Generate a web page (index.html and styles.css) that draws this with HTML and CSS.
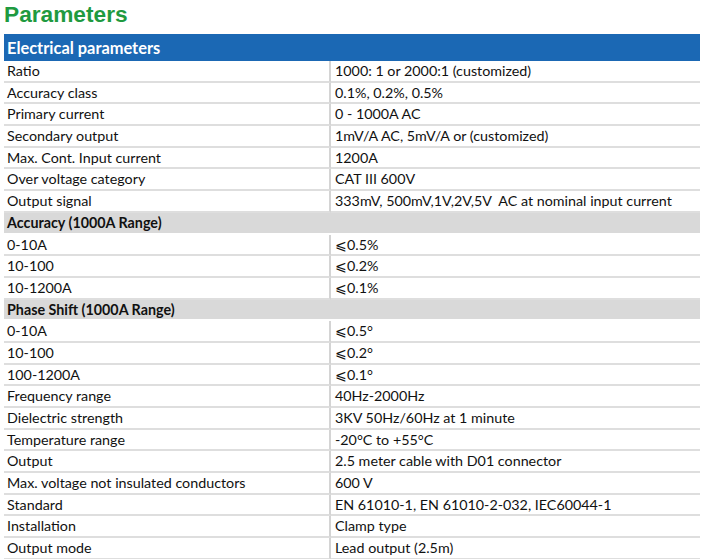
FILE: index.html
```html
<!DOCTYPE html>
<html>
<head>
<meta charset="utf-8">
<link rel="stylesheet" href="styles.css">
</head>
<body>
<div class="page">
  <h1 class="title">Parameters</h1>
  <div class="spec">
    <div class="head">Electrical parameters</div>
    <div class="k">Ratio</div><div class="v">1000: 1 or 2000:1 (customized)</div>
    <div class="k">Accuracy class</div><div class="v">0.1%, 0.2%, 0.5%</div>
    <div class="k">Primary current</div><div class="v">0 - 1000A AC</div>
    <div class="k">Secondary output</div><div class="v">1mV/A AC, 5mV/A or (customized)</div>
    <div class="k">Max. Cont. Input current</div><div class="v">1200A</div>
    <div class="k">Over voltage category</div><div class="v">CAT III 600V</div>
    <div class="k">Output signal</div><div class="v">333mV, 500mV,1V,2V,5V&nbsp; AC at nominal input current</div>
    <div class="sec">Accuracy (1000A Range)</div>
    <div class="k">0-10A</div><div class="v">⩽0.5%</div>
    <div class="k">10-100</div><div class="v">⩽0.2%</div>
    <div class="k">10-1200A</div><div class="v">⩽0.1%</div>
    <div class="sec">Phase Shift (1000A Range)</div>
    <div class="k">0-10A</div><div class="v">⩽0.5°</div>
    <div class="k">10-100</div><div class="v">⩽0.2°</div>
    <div class="k">100-1200A</div><div class="v">⩽0.1°</div>
    <div class="k">Frequency range</div><div class="v">40Hz-2000Hz</div>
    <div class="k">Dielectric strength</div><div class="v">3KV 50Hz/60Hz at 1 minute</div>
    <div class="k">Temperature range</div><div class="v">-20°C to +55°C</div>
    <div class="k">Output</div><div class="v">2.5 meter cable with D01 connector</div>
    <div class="k">Max. voltage not insulated conductors</div><div class="v">600 V</div>
    <div class="k">Standard</div><div class="v">EN 61010-1, EN 61010-2-032, IEC60044-1</div>
    <div class="k">Installation</div><div class="v">Clamp type</div>
    <div class="k">Output mode</div><div class="v">Lead output (2.5m)</div>
  </div>
</div>
</body>
</html>
```

FILE: styles.css
```css
html, body {
  margin: 0;
  padding: 0;
  background: #ffffff;
}
.page {
  width: 703px;
  padding: 0 3px 0 4px;
  box-sizing: border-box;
}
.title {
  margin: 0;
  height: 34px;
  padding-top: 1px;
  box-sizing: border-box;
  font-family: "Liberation Sans", Arial, sans-serif;
  font-weight: bold;
  font-size: 22.7px;
  line-height: 26px;
  color: #1f9a40;
}
.spec {
  display: grid;
  grid-template-columns: 327px 1fr;
  grid-template-rows: 27px;
  grid-auto-rows: 21.7px;
  font-family: Lato, "Open Sans", sans-serif;
  font-size: 14.3px;
  color: #111111;
}
.head {
  grid-column: 1 / 3;
  grid-row: 1;
  background: #1b68b4;
  color: #ffffff;
  font-weight: bold;
  font-size: 16.4px;
  line-height: 27px;
  padding-left: 3px;
}
.k, .v, .sec {
  box-sizing: border-box;
  border-bottom: 2px solid #dedede;
  line-height: 20px;
  white-space: nowrap;
  overflow: hidden;
}
.k {
  padding-left: 3px;
  border-right: 2px solid #d4d4d4;
}
.v {
  padding-left: 4px;
}
.sec {
  grid-column: 1 / 3;
  background: #d9d9d9;
  font-weight: bold;
  padding-left: 3px;
  border-bottom-color: #ffffff;
}
```
